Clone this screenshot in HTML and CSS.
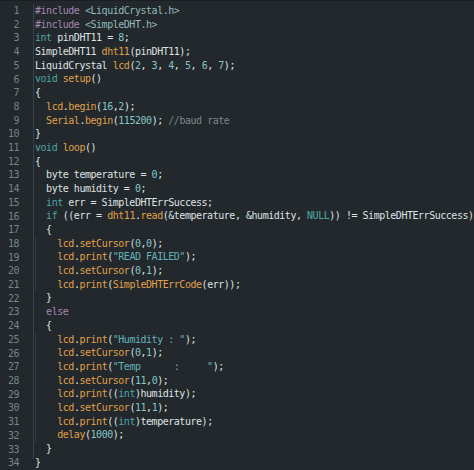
FILE: index.html
```html
<!DOCTYPE html>
<html lang="en">
<head>
  <meta charset="UTF-8" />
  <title>sketch.ino</title>
  <link rel="stylesheet" href="styles.css">
</head>
<body>

  <div class="editor">
    <div class="gutter">
      <div>1</div><div>2</div><div>3</div><div>4</div><div>5</div><div>6</div><div>7</div><div>8</div><div>9</div><div>10</div>
      <div>11</div><div>12</div><div>13</div><div>14</div><div>15</div><div>16</div><div>17</div><div>18</div><div>19</div><div>20</div>
      <div>21</div><div>22</div><div>23</div><div>24</div><div>25</div><div>26</div><div>27</div><div>28</div><div>29</div><div>30</div>
      <div>31</div><div>32</div><div>33</div><div>34</div>
    </div>

    <!-- code lines -->
    <div class="code">
      <div class="ln"><span class="pp">#include</span> <span class="inc">&lt;LiquidCrystal.h&gt;</span></div>
      <div class="ln"><span class="pp">#include</span> <span class="inc">&lt;SimpleDHT.h&gt;</span></div>
      <div class="ln"><span class="kw">int</span> pinDHT11 = <span class="num">8</span>;</div>
      <div class="ln">SimpleDHT11 <span class="fn">dht11</span>(pinDHT11);</div>
      <div class="ln">LiquidCrystal <span class="fn">lcd</span>(<span class="num">2</span>, <span class="num">3</span>, <span class="num">4</span>, <span class="num">5</span>, <span class="num">6</span>, <span class="num">7</span>);</div>
      <div class="ln"><span class="kw">void</span> <span class="fn">setup</span>()</div>
      <div class="ln">{</div>
      <div class="ln">  <span class="fn">lcd</span>.<span class="fn">begin</span>(<span class="num">16</span>,<span class="num">2</span>);</div>
      <div class="ln">  <span class="fn">Serial</span>.<span class="fn">begin</span>(<span class="num">115200</span>); <span class="cm">//baud rate</span></div>
      <div class="ln">}</div>
      <div class="ln"><span class="kw">void</span> <span class="fn">loop</span>()</div>
      <div class="ln">{</div>
      <div class="ln">  byte temperature = <span class="num">0</span>;</div>
      <div class="ln">  byte humidity = <span class="num">0</span>;</div>
      <div class="ln">  <span class="kw">int</span> err = SimpleDHTErrSuccess;</div>
      <div class="ln">  <span class="kw">if</span> ((err = <span class="fn">dht11</span>.<span class="fn">read</span>(&amp;temperature, &amp;humidity, <span class="kw">NULL</span>)) != SimpleDHTErrSuccess)</div>
      <div class="ln">  {</div>
      <div class="ln"><span class="ig">  </span>  <span class="fn">lcd</span>.<span class="fn">setCursor</span>(<span class="num">0</span>,<span class="num">0</span>);</div>
      <div class="ln"><span class="ig">  </span>  <span class="fn">lcd</span>.<span class="fn">print</span>(<span class="str">"READ FAILED"</span>);</div>
      <div class="ln"><span class="ig">  </span>  <span class="fn">lcd</span>.<span class="fn">setCursor</span>(<span class="num">0</span>,<span class="num">1</span>);</div>
      <div class="ln"><span class="ig">  </span>  <span class="fn">lcd</span>.<span class="fn">print</span>(<span class="fn">SimpleDHTErrCode</span>(err));</div>
      <div class="ln">  }</div>
      <div class="ln">  <span class="ctl">else</span></div>
      <div class="ln">  {</div>
      <div class="ln"><span class="ig">  </span>  <span class="fn">lcd</span>.<span class="fn">print</span>(<span class="str">"Humidity : "</span>);</div>
      <div class="ln"><span class="ig">  </span>  <span class="fn">lcd</span>.<span class="fn">setCursor</span>(<span class="num">0</span>,<span class="num">1</span>);</div>
      <div class="ln"><span class="ig">  </span>  <span class="fn">lcd</span>.<span class="fn">print</span>(<span class="str">"Temp      :     "</span>);</div>
      <div class="ln"><span class="ig">  </span>  <span class="fn">lcd</span>.<span class="fn">setCursor</span>(<span class="num">11</span>,<span class="num">0</span>);</div>
      <div class="ln"><span class="ig">  </span>  <span class="fn">lcd</span>.<span class="fn">print</span>((<span class="kw">int</span>)humidity);</div>
      <div class="ln"><span class="ig">  </span>  <span class="fn">lcd</span>.<span class="fn">setCursor</span>(<span class="num">11</span>,<span class="num">1</span>);</div>
      <div class="ln"><span class="ig">  </span>  <span class="fn">lcd</span>.<span class="fn">print</span>((<span class="kw">int</span>)temperature);</div>
      <div class="ln"><span class="ig">  </span>  <span class="fn">delay</span>(<span class="num">1000</span>);</div>
      <div class="ln">  }</div>
      <div class="ln">}</div>
    </div>
  </div>

</body>
</html>
```

FILE: styles.css
```css
body {
  margin: 0;
  background: #22282b;
  overflow: hidden;
}

.editor {
  display: flex;
  height: 470px;
  padding-top: 3px;
  box-sizing: border-box;
  border-top: 1px solid #1b2023;
  font-family: 'DejaVu Sans Mono', 'Liberation Mono', monospace;
  font-size: 10px;
  letter-spacing: -0.47px;
  line-height: 13.7px;
  color: #dfe2e3;
}

.gutter {
  width: 19px;
  text-align: right;
  color: #76848d;
  flex-shrink: 0;
}

.code {
  margin-left: 14px;
  padding-left: 1px;
  border-left: 1px solid #394248;
  height: 455px;
}

.ln {
  height: 13.7px;
  white-space: pre;
}

.ig {
  display: inline-block;
  height: 13.7px;
  vertical-align: top;
  box-shadow: inset 1px 0 0 #323a40;
}

.pp { color: #a287b3; }
.inc { color: #93b9bb; }
.kw { color: #4ea6a8; }
.fn { color: #e0a04a; }
.num { color: #86c6c8; }
.str { color: #63b3bb; }
.cm { color: #7d878d; }
.ctl { color: #a287b3; }
```
